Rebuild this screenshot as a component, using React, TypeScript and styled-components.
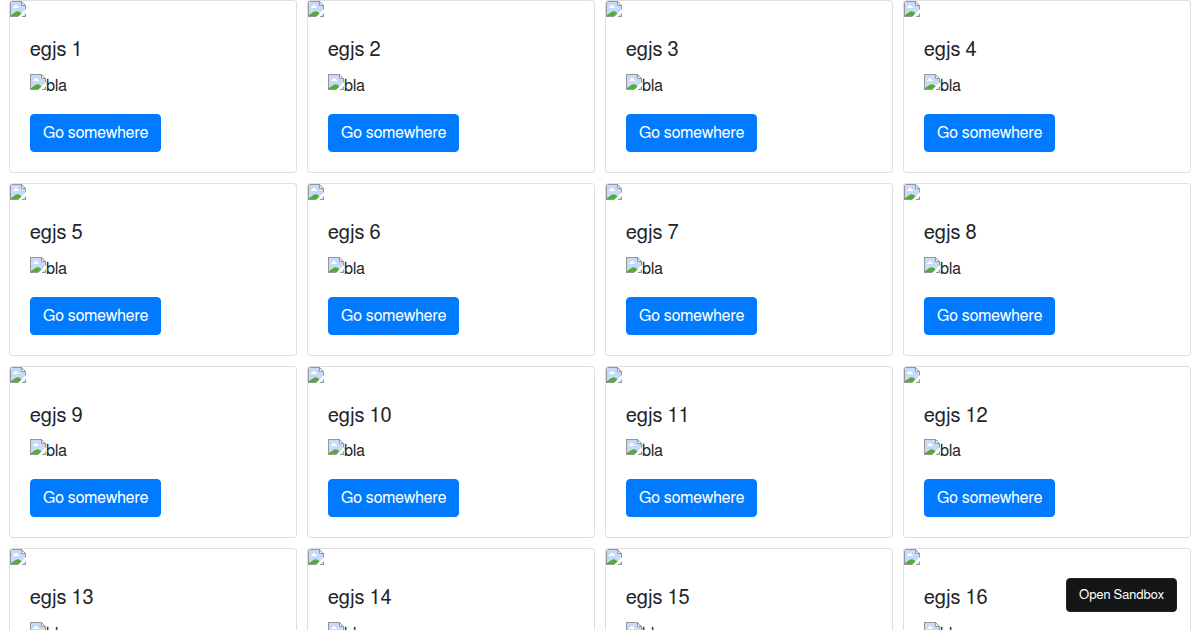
import React from "react";
import styled, { createGlobalStyle } from "styled-components";

const fontStack = `FreeSans, "Liberation Sans", Arial, sans-serif`;

const GlobalStyle = createGlobalStyle`
  *, *::before, *::after { box-sizing: border-box; }
  html, body, #root { height: 100%; }
  body {
    margin: 0;
    overflow: hidden;
    background: #fff;
    color: #212529;
    font-family: ${fontStack};
    font-size: 16px;
    font-kerning: none;
    line-height: 1.5;
  }
`;

const Viewport = styled.div`
  height: 100%;
  overflow: hidden;
`;

const CardGrid = styled.main`
  display: grid;
  grid-template-columns: repeat(4, minmax(0, 1fr));
  gap: 10px;
  padding: 0 9px;
`;

const Card = styled.article`
  display: flex;
  flex-direction: column;
  border: 1px solid rgba(0, 0, 0, 0.125);
  border-radius: 4px;
  background: #fff;
`;

const CardBody = styled.div`
  padding: 20px;
`;

const CardTitle = styled.h5`
  margin: 0 0 10px;
  font-size: 20px;
  font-weight: 500;
  line-height: 26px;
`;

const CardText = styled.p`
  margin: 0 0 16px;
`;

const AltImage = styled.span`
  display: inline-block;
  vertical-align: middle;
`;

const Icon = styled.svg<{ $inline?: boolean }>`
  display: block;
  flex: none;
  float: ${({ $inline }) => ($inline ? "left" : "none")};
  border-top-left-radius: ${({ $inline }) => ($inline ? "0" : "3px")};
`;

const PrimaryLink = styled.a`
  display: inline-block;
  vertical-align: middle;
  padding: 6px 12px;
  border: 1px solid #007bff;
  border-radius: 4px;
  background: #007bff;
  color: #fff;
  text-decoration: none;
`;

const SandboxButton = styled.button`
  position: fixed;
  right: 23px;
  bottom: 18px;
  padding: 8px 12px 7px;
  border: 1px solid #252525;
  border-radius: 4px;
  background: #151515;
  color: #fff;
  font-family: ${fontStack};
  font-size: 13px;
  font-kerning: none;
  line-height: 17px;
`;

const MissingImage = ({ inline = false }: { inline?: boolean }) => (
  <Icon $inline={inline} width="16" height="16" viewBox="0 0 16 16" aria-hidden="true">
    <path d="M1 1H11V5H15V15H1Z" fill="#c8dafa" />
    <path d="M3 7V6H4V5H5V4H7V5H8V6H9V7Z" fill="#fff" />
    <path d="M1 15V14L4 12Q7 9 10 11L12 13L10 15Z" fill="#53ab38" />
    <path d="M0 0H12V1H1V15H9V16H0Z" fill="#979797" />
    <path d="M12 0L16 4V5H11V0Z" fill="#f4f4f4" />
    <path d="M11.5 0V4.5H15.5V9" fill="none" stroke="#979797" />
    <path d="M11.5 .5L15.5 4.5" fill="none" stroke="#979797" />
    <path d="M16 8L8 16H12L16 12Z" fill="#fff" />
    <path d="M16 12V16H12V15H15V13Z" fill="#979797" />
    <path d="M13 15L15 13V15Z" fill="#c8dafa" />
  </Icon>
);

const items = Array.from({ length: 16 }, (_, index) => index + 1);

export default function App() {
  return (
    <Viewport>
      <GlobalStyle />
      <CardGrid>
        {items.map((item) => (
          <Card key={item}>
            <MissingImage />
            <CardBody>
              <CardTitle>egjs {item}</CardTitle>
              <CardText>
                <AltImage>
                  <MissingImage inline />
                  bla
                </AltImage>
              </CardText>
              <PrimaryLink href="#">Go somewhere</PrimaryLink>
            </CardBody>
          </Card>
        ))}
      </CardGrid>
      <SandboxButton type="button">Open Sandbox</SandboxButton>
    </Viewport>
  );
}
